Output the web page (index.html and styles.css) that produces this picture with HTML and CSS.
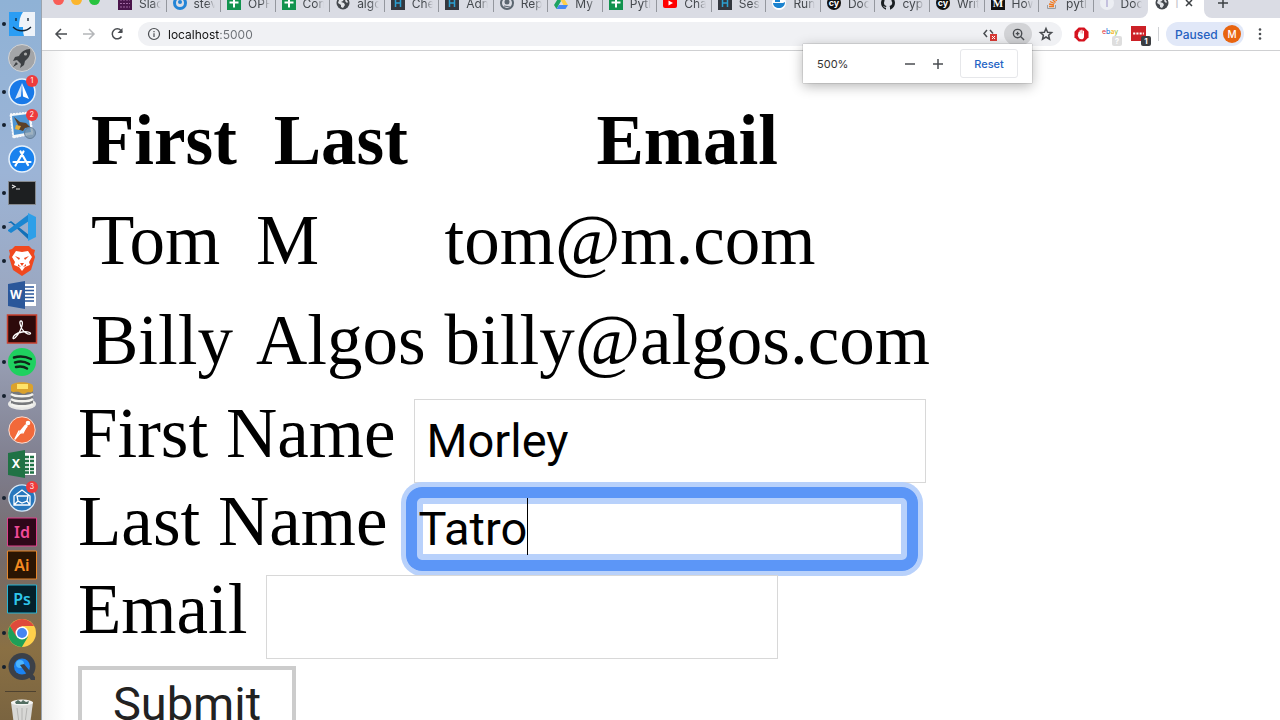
FILE: index.html
```html
<!DOCTYPE html>
<html lang="en">
<head>
    <meta charset="UTF-8">
    <title>localhost:5000</title>
    <link rel="stylesheet" href="styles.css">
</head>
<body>

<!-- icons used by more than one tab -->
<svg class="sprite" aria-hidden="true">
    <symbol id="sheet" viewBox="0 0 14 14"><path fill="#12934f" d="M0 0h14v14H0z"/><path fill="#fff" d="M2.500 5.500h9v2h-9z"/><path fill="#fff" d="M6 2.500h2v9H6z"/></symbol>
    <symbol id="hbox" viewBox="0 0 14 14"><path fill="#34383f" d="M0 0h14v14H0z"/><path fill="none" stroke="#2c9fd0" stroke-width="1.500" d="M4.500 2v9M9.500 2v9M4.500 7h5"/></symbol>
    <symbol id="cy" viewBox="0 0 14 14"><circle cx="7" cy="7" r="7" fill="#111"/><text x="7" y="10" text-anchor="middle" font-size="9" font-weight="700" fill="#fff">cy</text></symbol>
    <symbol id="globe" viewBox="0 0 14 14"><circle cx="7" cy="7" r="6.500" fill="#44484d"/><path fill="#e2e4e8" d="M3 4l3-2 2 1-1 2-2 1 3 1 1 2-2 3-2-1V9L2 7zM10 3l2 3-1 1-2-2z"/></symbol>
</svg>

<aside class="dock">
    <ul class="dock-list">
        <li class="running"><svg viewBox="0 0 28 28"><path fill="#2a9df4" d="M1 2h26v24H1z"/><path fill="#eef3f9" d="M15 2h12v24H16c-1-3-1-6-1-9h-4c0-6 1-11 4-15z"/><path fill="none" stroke="#123" stroke-width="1.300" d="M8 8v3M20 8v3M5 17c5 5 13 5 18 0"/></svg></li>
        <li><svg viewBox="0 0 28 28"><circle cx="14" cy="14" r="13.500" fill="#a3a5a8" stroke="#d2d4d6"/><path fill="#3d4044" d="M22 5c-5 0-9 3-11 7l-4 1-2 4 4-1 4 4-1 4 4-3 1-4c4-3 6-7 5-12zM8 18l-3 5 5-3z"/><circle cx="17.500" cy="10" r="1.600" fill="#aaa"/></svg></li>
        <li class="running"><svg viewBox="0 0 28 28"><circle cx="14" cy="14" r="13" fill="#1879e8" stroke="#e7f1fb" stroke-width="1.500"/><path fill="#fff" d="M14 5l7 16-6-2.500z"/><path fill="#d5e6fa" d="M14 5L7 21l6-2.500z"/></svg><b class="badge">1</b></li>
        <li class="running"><svg viewBox="0 0 28 28"><path fill="#f5f7f9" stroke="#fff" stroke-dasharray="2 1" d="M2 3l20-2 3 22-20 4z"/><path fill="#4e95d4" d="M4 5l16-2 3 18-17 3z"/><path fill="#5b4128" d="M6 6l6 5 6 1 4 4-5 1-2 3-6-2 1-4z"/><path fill="#e8b03a" d="M8 14l5 1-2 4-4-1z"/><circle cx="22" cy="22" r="5.500" fill="#7b94a8" fill-opacity=".7" stroke="#66809a"/></svg><b class="badge">2</b></li>
        <li><svg viewBox="0 0 28 28"><circle cx="14" cy="14" r="13" fill="#1a82ee" stroke="#e7f1fb" stroke-width="1.500"/><path fill="none" stroke="#fff" stroke-width="2.200" stroke-linecap="round" d="M15.500 6.500L9 18M12.500 6.500L20 20M5.500 17H16M19.500 17h3M7.500 20.500l.5-1"/></svg></li>
        <li class="running"><svg viewBox="0 0 28 28"><path fill="#1d1f21" stroke="#85898e" d="M.500 2.500h27v23H.500z"/><path fill="none" stroke="#e4e4e4" stroke-width="1.200" d="M4 6l3 1.500L4 9M8 10h4"/></svg></li>
        <li class="running"><svg viewBox="0 0 28 28"><path fill="#1270b8" d="M0 10l3-2 18 14v5L3 10z"/><path fill="#1c86d1" d="M0 18l3 2L21 8V1L0 17z"/><path fill="#2e9fe8" d="M20 0l8 4v20l-8 4z"/></svg></li>
        <li class="running"><svg viewBox="0 0 28 28"><path fill="#f0481e" d="M7-1h14l3 3 3 1-1 4 1 3-4 13-9 6-9-6L1 10l1-3-1-4 3-1z"/><path fill="#fff" d="M8 4l6 1 6-1 4 6-3 5 1 3-5 2-3 4-3-4-5-2 1-3-3-5z"/><path fill="#f0481e" d="M7 9l5 2-1 2zM21 9l-5 2 1 2zM12 16h4l-2 3zM10 17l3 3-3-1zM18 17l-3 3 3-1z"/></svg></li>
        <li><svg viewBox="0 0 28 28"><path fill="#fff" d="M14 3h14v22H14z"/><path stroke="#2b579a" stroke-width="1.500" d="M17 6h9M17 9.500h9M17 13h9M17 16.500h9M17 20h9"/><path fill="#2b579a" d="M0 3l17-3v28L0 25z"/><text x="8" y="18" text-anchor="middle" font-size="12" font-weight="700" fill="#fff">W</text></svg></li>
        <li><svg viewBox="0 0 28 28"><path fill="#2d0a0b" stroke="#c8402f" stroke-width="1.500" d="M-.500 0h29v28h-29z"/><path fill="none" stroke="#fff" stroke-width="1.300" d="M13 6c-2 0-1 4 1 8 2 3 6 6 8 5s-2-3-8-2-9 4-9 6 4-1 7-7 3-10 1-10z"/></svg></li>
        <li class="running"><svg viewBox="0 0 28 28"><circle cx="14" cy="14" r="14" fill="#1fd15f"/><path fill="none" stroke="#11261a" stroke-linecap="round" stroke-width="2.500" d="M6 9.500c6-2 12-1 17 1.500M7 14.500c5-1.500 10-1 14 1.500M8 19c4-1 8-.500 11 1.500"/></svg></li>
        <li class="running"><svg viewBox="0 0 28 28"><ellipse cx="14" cy="22" rx="14" ry="6" fill="#e8e8e6"/><path fill="#77797c" d="M3 7h22v15c-3 4-19 4-22 0z"/><path fill="none" stroke="#f3f3ef" stroke-width="2.500" d="M3 12c4 3 18 3 22 0M3 17c4 3 18 3 22 0M3 22c4 3 18 3 22 0"/><path fill="#dba22c" d="M3 4c1-5 21-5 22 0v5c-2 3-5 0-7 2s-5 0-7-1-6 1-8-1z"/><path fill="#ffe36a" d="M9 2h11v5H9z"/></svg></li>
        <li><svg viewBox="0 0 28 28"><circle cx="14" cy="14" r="13.200" fill="#f2693a" stroke="#fbdccf"/><circle cx="20" cy="7" r="2.300" fill="#fff"/><path fill="none" stroke="#fff" stroke-linecap="round" stroke-width="3.500" d="M18 10l-5 6"/><path fill="none" stroke="#fff" stroke-linecap="round" stroke-width="1.500" d="M13 16l-6 7M11 15l-4 8M18 11l-3 6"/></svg></li>
        <li><svg viewBox="0 0 28 28"><path fill="#fff" d="M14 3h14v22H14z"/><path stroke="#207245" stroke-width="2.500" stroke-dasharray="4 1" d="M17 7h9M17 11h9M17 15h9M17 19h9M17 22.500h9"/><path fill="#207245" d="M0 3l17-3v28L0 25z"/><text x="8" y="18" text-anchor="middle" font-size="12" font-weight="700" fill="#fff">X</text></svg></li>
        <li class="running"><svg viewBox="0 0 28 28"><circle cx="14" cy="14" r="13.200" fill="#2777bd" stroke="#d8e8f6" stroke-width="1.300"/><path fill="none" stroke="#fff" stroke-width="1.300" d="M6 12l8-6 8 6v9H6zM9 12h11l-1 5-5 2-4-2zM6 21l4-4M22 21l-3-4"/></svg><b class="badge">3</b></li>
        <li><svg viewBox="0 0 28 28"><path fill="#2e0719" stroke="#e0408b" d="M-.500 0h29v28h-29z"/><text x="14" y="20" text-anchor="middle" class="adobe" fill="#f04a98">Id</text></svg></li>
        <li><svg viewBox="0 0 28 28"><path fill="#2a1503" stroke="#e8872b" d="M-.500 0h29v28h-29z"/><text x="14" y="20" text-anchor="middle" class="adobe" fill="#f58a20">Ai</text></svg></li>
        <li><svg viewBox="0 0 28 28"><path fill="#03202b" stroke="#27b4d6" d="M-.500 0h29v28h-29z"/><text x="14" y="20" text-anchor="middle" class="adobe" fill="#2fc6ea">Ps</text></svg></li>
        <li class="running"><svg viewBox="0 0 28 28"><circle cx="14" cy="14" r="14" fill="#ffd04b"/><path fill="#df4a3c" d="M1.900 7a14 14 0 0 1 24.200 0H14l-6 11z"/><path fill="#1e9f58" d="M1.900 7a14 14 0 0 0 12 21l6.200-10.500L14 20l-6-3z"/><circle cx="14" cy="14" r="6.500" fill="#fff"/><circle cx="14" cy="14" r="5" fill="#4585f1"/></svg></li>
        <li class="running"><svg viewBox="0 0 28 28"><circle cx="14" cy="13.500" r="13.500" fill="#3b4048"/><circle cx="14" cy="13.500" r="8" fill="#1b83f2"/><circle cx="12" cy="11" r="4" fill="#4cb5ff"/><path fill="#3b4048" d="M12 12l4-1 11 13v3h-4z"/></svg></li>
    </ul>
    <div class="trash">
        <svg viewBox="0 0 24 26"><path fill="#d8d8d6" d="M1 3l3 23h16l3-23z"/><ellipse cx="12" cy="3.500" rx="11" ry="3" fill="#f4f4f2"/><path fill="#536e62" d="M5 3l3-2 3 2 2-2 3 2 3-1-1 3H6z"/><path stroke="#b4b4b2" d="M7 9l2 15M12 9v15M17 9l-2 15"/></svg>
    </div>
</aside>

<div class="browser">
    <header class="tab-strip">
        <div class="lights"><i class="red"></i><i class="amber"></i><i class="green"></i></div>
        <nav class="tabs">
            <a href="#" class="tab"><svg viewBox="0 0 14 14"><path fill="#4a154b" d="M0 0h14v14H0z"/><path stroke="#a26ba3" stroke-dasharray="2 1" d="M2 4h10M2 7.500h10M2 11h10"/></svg><span>Slac</span></a>
            <a href="#" class="tab"><svg viewBox="0 0 14 14"><circle cx="7" cy="7" r="5.500" fill="none" stroke="#2384d6" stroke-width="3"/><circle cx="7" cy="6" r="2" fill="#2384d6"/></svg><span>stev</span></a>
            <a href="#" class="tab"><svg><use href="#sheet"/></svg><span>OPF</span></a>
            <a href="#" class="tab"><svg><use href="#sheet"/></svg><span>Con</span></a>
            <a href="#" class="tab"><svg><use href="#globe"/></svg><span>algo</span></a>
            <a href="#" class="tab"><svg><use href="#hbox"/></svg><span>Che</span></a>
            <a href="#" class="tab"><svg><use href="#hbox"/></svg><span>Adn</span></a>
            <a href="#" class="tab"><svg viewBox="0 0 14 14"><circle cx="7" cy="7" r="6" fill="none" stroke="#5b6670" stroke-width="2"/><circle cx="7" cy="6" r="2.500" fill="#5b6670"/><path stroke="#5b6670" d="M4 10l6 1"/></svg><span>Rep</span></a>
            <a href="#" class="tab"><svg viewBox="0 0 14 14"><path fill="#1da362" d="M5 1L0 9l2.500 4L7 5z"/><path fill="#ffcf48" d="M5 1h4l5 8H9.500z"/><path fill="#4688f4" d="M2.500 13L5 9h9l-2.500 4z"/></svg><span>My</span></a>
            <a href="#" class="tab"><svg><use href="#sheet"/></svg><span>Pytl</span></a>
            <a href="#" class="tab"><svg viewBox="0 0 14 14"><rect y="2" width="14" height="10" rx="2" fill="#f00"/><path fill="#fff" d="M5.500 4.500v5L10 7z"/></svg><span>Cha</span></a>
            <a href="#" class="tab"><svg><use href="#hbox"/></svg><span>Ses</span></a>
            <a href="#" class="tab"><svg viewBox="0 0 14 14"><circle cx="7" cy="7" r="7" fill="#fff"/><path fill="#1c83cf" d="M1 7h10l2-1c0 4-3 6-6 6S1 10 1 7zM3 4h5v2H3z"/></svg><span>Run</span></a>
            <a href="#" class="tab"><svg><use href="#cy"/></svg><span>Doc</span></a>
            <a href="#" class="tab"><svg viewBox="0 0 14 14"><path fill="#1b1f23" d="M7 0a7 7 0 0 0-2 13.700v-2C3 12 2.800 10.500 2 10c1 0 1.500 1.200 3 1l.5-1C3 9.500 2.500 7 3.500 5V3l2 .8h3L10.500 3v2c1.500 2 .5 4.500-2 5l.5 1.200v2.500A7 7 0 0 0 7 0z"/></svg><span>cyp</span></a>
            <a href="#" class="tab"><svg><use href="#cy"/></svg><span>Writ</span></a>
            <a href="#" class="tab"><svg viewBox="0 0 14 14"><path fill="#111" d="M0 0h14v14H0z"/><text x="7" y="11" text-anchor="middle" class="serif" font-size="11" font-weight="700" fill="#fff">M</text></svg><span>How</span></a>
            <a href="#" class="tab"><svg viewBox="0 0 14 14"><path fill="none" stroke="#9a9da1" d="M2.500 9v3.500h8V9"/><path stroke="#f2791f" stroke-width="1.300" d="M4 10.500h5M4 8l5 1M5 5.500l4.500 2M7 3l3.500 3.500M9.500 1l2 4"/></svg><span>pytl</span></a>
            <a href="#" class="tab"><svg viewBox="0 0 14 14"><circle cx="7" cy="7" r="7" fill="#eceef3"/><path stroke="#9c93c9" d="M7 3v8"/></svg><span>Doc</span></a>
        </nav>
        <div class="tab-active">
            <svg><use href="#globe"/></svg><span>l</span>
            <button type="button" aria-label="Close tab"><svg viewBox="0 0 8 8"><path d="M1 1l6 6M7 1L1 7"/></svg></button>
        </div>
        <div class="strip-end">
            <button type="button" aria-label="New tab"><svg viewBox="0 0 12 12"><path d="M6 1v10M1 6h10"/></svg></button>
        </div>
    </header>

    <div class="toolbar">
        <button type="button" class="nav" aria-label="Back"><svg viewBox="0 0 14 14"><path d="M13 7H2M7 2L2 7l5 5"/></svg></button>
        <button type="button" class="nav off" aria-label="Forward"><svg viewBox="0 0 14 14"><path d="M1 7h11M7 2l5 5-5 5"/></svg></button>
        <button type="button" class="nav" aria-label="Reload"><svg viewBox="0 0 14 14"><path d="M11.500 9.500a5 5 0 1 1-.500-6L12 5"/><path fill="#4a4d51" stroke="none" d="M12.500 1v5h-5z"/></svg></button>
        <div class="omnibox">
            <svg class="info" viewBox="0 0 14 14"><circle cx="7" cy="7" r="5.500"/><path d="M7 6.200V10M7 4v1.200"/></svg>
            <input type="text" class="url" aria-label="Address" value="localhost:5000">
            <svg class="code" viewBox="0 0 16 14"><path d="M5 3L2 6.500 5 10M8 3l3 3.500"/><path fill="#d93a35" stroke="none" d="M8 7h7v7H8z"/><path class="thin" d="M10 9l3 3M13 9l-3 3"/></svg>
            <div class="zoom">
                <button type="button" class="zoom-btn" aria-label="Zoom"><svg viewBox="0 0 14 14"><circle cx="6" cy="6" r="4.500"/><path d="M9.500 9.500L13 13M6 4v4M4 6h4"/></svg></button>
                <div class="zoom-popup">
                    <span class="level">500%</span>
                    <button type="button" class="step" aria-label="Zoom out"><svg viewBox="0 0 12 12"><path d="M1 6h10"/></svg></button>
                    <button type="button" class="step" aria-label="Zoom in"><svg viewBox="0 0 12 12"><path d="M1 6h10M6 1v10"/></svg></button>
                    <button type="button" class="reset">Reset</button>
                </div>
            </div>
            <button type="button" class="star" aria-label="Bookmark"><svg viewBox="0 0 14 14"><path d="M7 1.500l1.600 3.700 4 .3-3 2.700.9 4L7 10l-3.500 2.200.9-4-3-2.700 4-.3z"/></svg></button>
        </div>
        <div class="extensions">
            <svg viewBox="0 0 16 16"><path fill="#d5121e" d="M5 .500h6L15.500 5v6L11 15.500H5L.500 11V5z"/><path fill="#fff" d="M5 5h1V3.500h1.300V7h.4V3h1.300v4h.4V4h1.300v6c0 2-1 3-2.700 3-2 0-3-1-4-4z"/></svg>
            <span class="ext ebay"><i>e</i><i>b</i><i>a</i><i>y</i><b>?</b></span>
            <span class="ext dots"><svg viewBox="0 0 14 14"><path fill="#cc2127" d="M0 0h14v14H0z"/><path stroke="#fff" stroke-width="2" stroke-dasharray="2 1" d="M2 7h10"/></svg><b>1</b></span>
        </div>
        <button type="button" class="profile">Paused <i>M</i></button>
        <button type="button" class="menu" aria-label="Menu"><svg viewBox="0 0 4 14"><circle cx="2" cy="2.500" r="1.300"/><circle cx="2" cy="7" r="1.300"/><circle cx="2" cy="11.500" r="1.300"/></svg></button>
    </div>

    <main class="page">
        <table>
            <thead>
                <tr><th>First</th><th>Last</th><th>Email</th></tr>
            </thead>
            <tbody>
                <tr><td>Tom</td><td>M</td><td>tom@m.com</td></tr>
                <tr><td>Billy</td><td>Algos</td><td>billy@algos.com</td></tr>
            </tbody>
        </table>
        <form>
            <div class="field">
                <label for="first">First Name</label>
                <input type="text" id="first" value="Morley">
            </div>
            <div class="field focused">
                <label for="last">Last Name</label>
                <input type="text" id="last" value="Tatro">
                <i class="caret"></i>
            </div>
            <div class="field">
                <label for="email">Email</label>
                <input type="text" id="email">
            </div>
            <button type="submit" class="submit">Submit</button>
        </form>
    </main>
</div>

</body>
</html>
```
FILE: styles.css
```css
* {
    box-sizing: border-box;
}

body {
    display: flex;
    height: 100vh;
    margin: 0;
    overflow: hidden;
    background: #34506f;
    font-family: Inter, "Liberation Sans", sans-serif;
}

button {
    padding: 0;
    border: 0;
    background: none;
    font-family: inherit;
}

i {
    font-style: normal;
}

svg {
    display: block;
    flex: none;
    overflow: visible;
}

.sprite {
    position: absolute;
    width: 0;
    height: 0;
}

.serif {
    font-family: "Liberation Serif", serif;
}

.adobe {
    font-family: "Noto Sans", sans-serif;
    font-size: 16px;
    font-weight: 600;
}

/* dock */
.dock {
    display: flex;
    flex-direction: column;
    width: 42px;
    padding-top: 7px;
    border-right: 1px solid #9aa3ae;
    background: linear-gradient(#8fb2d6, #9cb4d6 24%, #9aa2b8 48%, #7d7b8a 66%, #756a68 78%, #8a7044 90%, #7a6440);
}

.dock-list {
    display: flex;
    flex: 1;
    flex-direction: column;
    margin: 0;
    padding: 0;
    list-style: none;
}

.dock-list li {
    position: relative;
    display: flex;
    flex: 1;
    align-items: center;
    padding-left: 8px;
    min-height: 0;
}

.dock-list svg {
    width: 28px;
    height: 28px;
}

.running::before {
    content: "";
    position: absolute;
    left: 2px;
    width: 4px;
    height: 4px;
    border-radius: 50%;
    background: #15202e;
}

.badge {
    position: absolute;
    top: 0;
    right: 3px;
    width: 12px;
    height: 12px;
    border-radius: 50%;
    background: #ee3b3c;
    color: #fff;
    font-size: 7px;
    font-weight: 400;
    line-height: 12px;
    text-align: center;
}

.trash {
    height: 36px;
    margin: 0 5px;
    padding: 7px 5px;
}

.trash::before {
    content: "";
    display: block;
    height: 1px;
    margin: 0 -5px 7px;
    background: #4e4230;
}

.trash svg {
    width: 24px;
    height: 26px;
}

/* browser window, its top edge is above the screen */
.browser {
    display: flex;
    flex: 1;
    flex-direction: column;
    min-width: 0;
    margin-top: -12px;
    background: #fff;
}

.tab-strip {
    display: flex;
    height: 30px;
    color: #45494e;
    font-size: 12px;
}

.lights {
    display: flex;
    align-items: center;
    gap: 7px;
    width: 70px;
    padding: 0 0 8px 11px;
    background: #dadce4;
}

.lights i {
    width: 11px;
    height: 11px;
    border-radius: 50%;
}

.red {
    background: #f95d57;
}

.amber {
    background: #fbb52e;
}

.green {
    background: #28c33f;
}

.tabs {
    display: flex;
    flex: 1;
    min-width: 0;
    border-bottom-right-radius: 8px;
    background: #dadce4;
}

.tab {
    display: flex;
    flex: 1 1 0;
    align-items: center;
    gap: 7px;
    min-width: 0;
    padding-left: 6px;
    color: inherit;
    text-decoration: none;
}

.tab svg,
.tab-active > svg {
    width: 14px;
    height: 14px;
}

.tab span {
    flex: 1;
    overflow: hidden;
    margin-right: 5px;
    white-space: nowrap;
    -webkit-mask-image: linear-gradient(to right, #000 60%, transparent);
    mask-image: linear-gradient(to right, #000 60%, transparent);
}

.tab::after {
    content: "";
    width: 1px;
    height: 18px;
    margin-left: -7px;
    background: #94979e;
}

.tab:last-child::after {
    background: none;
}

.tab-active {
    display: flex;
    align-items: center;
    justify-content: space-between;
    width: 56px;
    padding: 0 11px 0 7px;
    background: #fff;
}

.tab-active span {
    color: #c3c5c9;
}

.tab-active button svg {
    width: 8px;
    height: 8px;
}

.tab-strip button svg {
    stroke: #3c4043;
    stroke-width: 1.5;
}

.strip-end {
    display: flex;
    align-items: center;
    width: 76px;
    padding-left: 13px;
    border-bottom-left-radius: 8px;
    background: #dadce4;
}

.strip-end svg {
    width: 12px;
    height: 12px;
}

.toolbar {
    display: flex;
    align-items: center;
    height: 33px;
    padding: 0 18px 0 12px;
    border-bottom: 1px solid #cfd0d2;
}

.toolbar svg {
    fill: none;
    stroke: #4a4d51;
    stroke-width: 1.5;
}

.nav {
    width: 28px;
}

.nav svg {
    width: 14px;
    height: 14px;
}

.nav.off svg {
    stroke: #b4b6b9;
}

.omnibox {
    display: flex;
    flex: 1;
    align-items: center;
    height: 24px;
    padding: 0 9px;
    border-radius: 12px;
    background: #f0f1f4;
}

.omnibox .info {
    width: 14px;
    height: 14px;
    stroke-width: 1.2;
}

.url {
    flex: 1;
    min-width: 0;
    padding: 0 0 0 7px;
    border: 0;
    outline: 0;
    /* host black, port grey */
    background: linear-gradient(to right, #111 59px, #6c7075 59px);
    -webkit-background-clip: text;
    background-clip: text;
    color: transparent;
    font-family: inherit;
    font-size: 12px;
}

.omnibox .code {
    width: 16px;
    height: 14px;
    margin-right: 6px;
}

.code .thin {
    stroke: #fff;
    stroke-width: 1;
}

.zoom {
    position: relative;
}

.zoom-btn {
    display: flex;
    align-items: center;
    justify-content: center;
    width: 28px;
    height: 22px;
    border-radius: 11px;
    background: #d2d3d6;
}

.zoom-btn svg {
    width: 13px;
    height: 13px;
}

.star {
    margin-left: 7px;
}

.star svg {
    width: 14px;
    height: 14px;
}

.zoom-popup {
    position: absolute;
    z-index: 1;
    top: 21px;
    right: 0;
    display: flex;
    align-items: center;
    width: 229px;
    height: 39px;
    padding: 0 14px;
    background: #fff;
    box-shadow: 0 0 1px rgba(0, 0, 0, .5), 0 3px 12px rgba(0, 0, 0, .3);
}

.level {
    flex: 1;
    color: #333;
    font-size: 11px;
}

.step {
    width: 28px;
}

.step svg {
    width: 12px;
    height: 12px;
    margin: 0 auto;
}

.reset {
    width: 58px;
    height: 29px;
    margin-left: 8px;
    border: 1px solid #e6e7ea;
    border-radius: 3px;
    color: #2463c4;
    font-size: 11px;
    font-weight: 500;
}

.extensions {
    display: flex;
    align-items: center;
    gap: 13px;
    padding: 0 11px 0 12px;
}

.extensions svg {
    width: 15px;
    height: 15px;
    stroke: none;
}

.ext {
    position: relative;
    width: 16px;
    height: 16px;
}

.ext b {
    position: absolute;
    right: -4px;
    bottom: -4px;
    width: 10px;
    height: 10px;
    border-radius: 2px;
    background: #3b3e42;
    color: #fff;
    font-size: 8px;
    line-height: 10px;
    text-align: center;
}

.ebay {
    display: flex;
    font-size: 7px;
    line-height: 12px;
}

.ebay b {
    background: #dedede;
}

.ebay i:nth-child(1) {
    color: #e53238;
}

.ebay i:nth-child(2) {
    color: #0064d2;
}

.ebay i:nth-child(3) {
    color: #f5af02;
}

.ebay i:nth-child(4) {
    color: #86b817;
}

.dots svg path + path {
    stroke: #fff;
}

.profile {
    position: relative;
    display: flex;
    align-items: center;
    justify-content: space-between;
    width: 78px;
    height: 24px;
    margin-left: 8px;
    padding: 0 3px 0 9px;
    border-radius: 12px;
    background: #e1e8f8;
    color: #2560c0;
    font-size: 12px;
    font-weight: 500;
}

.profile::before {
    content: "";
    position: absolute;
    left: -8px;
    width: 1px;
    height: 14px;
    background: #cfd1d4;
}

.profile i {
    width: 18px;
    height: 18px;
    border-radius: 50%;
    background: #e8640f;
    color: #fff;
    font-size: 10px;
    line-height: 18px;
}

.menu {
    margin-left: 14px;
}

.toolbar .menu svg {
    width: 4px;
    height: 14px;
    fill: #4a4d51;
    stroke: none;
}

/* page at 500% zoom */
.page {
    flex: 1;
    min-height: 0;
    padding: 35px 36px;
    background: linear-gradient(to right, #f1f1f1, #fff 24px);
    color: #000;
    font-family: "Liberation Serif", serif;
    font-size: 71px;
}

table {
    border-spacing: 9px;
    line-height: 83px;
}

th,
td {
    padding: 4px 6px 4px 4px;
}

.field {
    position: relative;
    display: flex;
    align-items: baseline;
    gap: 18px;
    height: 88px;
    line-height: 76px;
}

.field input {
    width: 512px;
    height: 84px;
    padding: 0 12px;
    border: 1px solid #d8d8d8;
    outline: 0;
    background: #fff;
    font-family: Roboto, sans-serif;
    font-size: 47px;
}

.focused input {
    padding: 0 13px;
    border: 0;
    border-radius: 16px;
    box-shadow: 0 0 0 5px #b8d1fb, inset 0 0 0 11px #5c96f7, inset 0 0 0 17px #b8d1fb;
}

.caret {
    position: absolute;
    top: 15px;
    left: 449px;
    width: 1px;
    height: 57px;
    background: #000;
}

.submit {
    display: block;
    width: 218px;
    margin-top: 7px;
    border: 4px solid #ccc;
    background: #fff;
    color: #222;
    font-family: Roboto, sans-serif;
    font-size: 47px;
    line-height: 68px;
}
```
